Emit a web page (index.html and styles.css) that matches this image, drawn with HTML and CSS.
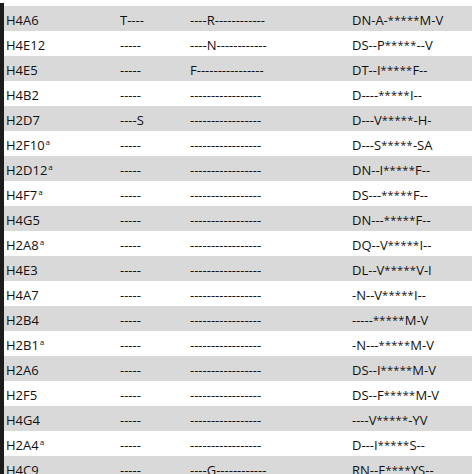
FILE: index.html
```html
<!DOCTYPE html>
<html>
<head>
<meta charset="utf-8">
<link rel="stylesheet" href="styles.css">
</head>
<body>
<div class="table">
  <div class="row odd"><span>H4A6</span><span>T----</span><span>----R------------</span><span>DN-A-<i>*****</i>M-V</span></div>
  <div class="row"><span>H4E12</span><span>-----</span><span>----N------------</span><span>DS--P<i>*****</i>--V</span></div>
  <div class="row odd"><span>H4E5</span><span>-----</span><span>F----------------</span><span>DT--I<i>*****</i>F--</span></div>
  <div class="row"><span>H4B2</span><span>-----</span><span>-----------------</span><span>D----<i>*****</i>I--</span></div>
  <div class="row odd"><span>H2D7</span><span>----S</span><span>-----------------</span><span>D---V<i>*****</i>-H-</span></div>
  <div class="row"><span>H2F10<sup>a</sup></span><span>-----</span><span>-----------------</span><span>D---S<i>*****</i>-SA</span></div>
  <div class="row odd"><span>H2D12<sup>a</sup></span><span>-----</span><span>-----------------</span><span>DN--I<i>*****</i>F--</span></div>
  <div class="row"><span>H4F7<sup>a</sup></span><span>-----</span><span>-----------------</span><span>DS---<i>*****</i>F--</span></div>
  <div class="row odd"><span>H4G5</span><span>-----</span><span>-----------------</span><span>DN---<i>*****</i>F--</span></div>
  <div class="row"><span>H2A8<sup>a</sup></span><span>-----</span><span>-----------------</span><span>DQ--V<i>*****</i>I--</span></div>
  <div class="row odd"><span>H4E3</span><span>-----</span><span>-----------------</span><span>DL--V<i>*****</i>V-I</span></div>
  <div class="row"><span>H4A7</span><span>-----</span><span>-----------------</span><span>-N--V<i>*****</i>I--</span></div>
  <div class="row odd"><span>H2B4</span><span>-----</span><span>-----------------</span><span>-----<i>*****</i>M-V</span></div>
  <div class="row"><span>H2B1<sup>a</sup></span><span>-----</span><span>-----------------</span><span>-N---<i>*****</i>M-V</span></div>
  <div class="row odd"><span>H2A6</span><span>-----</span><span>-----------------</span><span>DS--I<i>*****</i>M-V</span></div>
  <div class="row"><span>H2F5</span><span>-----</span><span>-----------------</span><span>DS--F<i>*****</i>M-V</span></div>
  <div class="row odd"><span>H4G4</span><span>-----</span><span>-----------------</span><span>----V<i>*****</i>-YV</span></div>
  <div class="row"><span>H2A4<sup>a</sup></span><span>-----</span><span>-----------------</span><span>D---I<i>*****</i>S--</span></div>
  <div class="row odd"><span>H4C9</span><span>-----</span><span>----G------------</span><span>RN--E<i>****</i>YS--</span></div>
</div>
</body>
</html>
```
FILE: styles.css
```css
html, body {
  margin: 0;
  padding: 0;
  background: #ffffff;
}
body {
  width: 474px;
  height: 474px;
  overflow: hidden;
  font-family: "Open Sans", "Liberation Sans", sans-serif;
  font-size: 13px;
  color: #111111;
}
.table {
  margin-top: 3px;
  padding-top: 3px;
  border-left: 4px solid #1c1c1c;
  margin-right: 2px;
}
.row {
  display: grid;
  grid-template-columns: 114px 70px 162px 1fr;
  height: 25px;
  align-items: center;
  padding-left: 2px;
  white-space: nowrap;
}
.row span {
  line-height: 25px;
  padding-top: 1px;
}
.row i {
  font-style: normal;
  font-size: 11px;
  letter-spacing: 0.3px;
  vertical-align: 1px;
}
.odd {
  background: #d9d9d9;
}
sup {
  font-size: 8px;
  line-height: 0;
  vertical-align: 5px;
  margin-left: 1px;
}
```
